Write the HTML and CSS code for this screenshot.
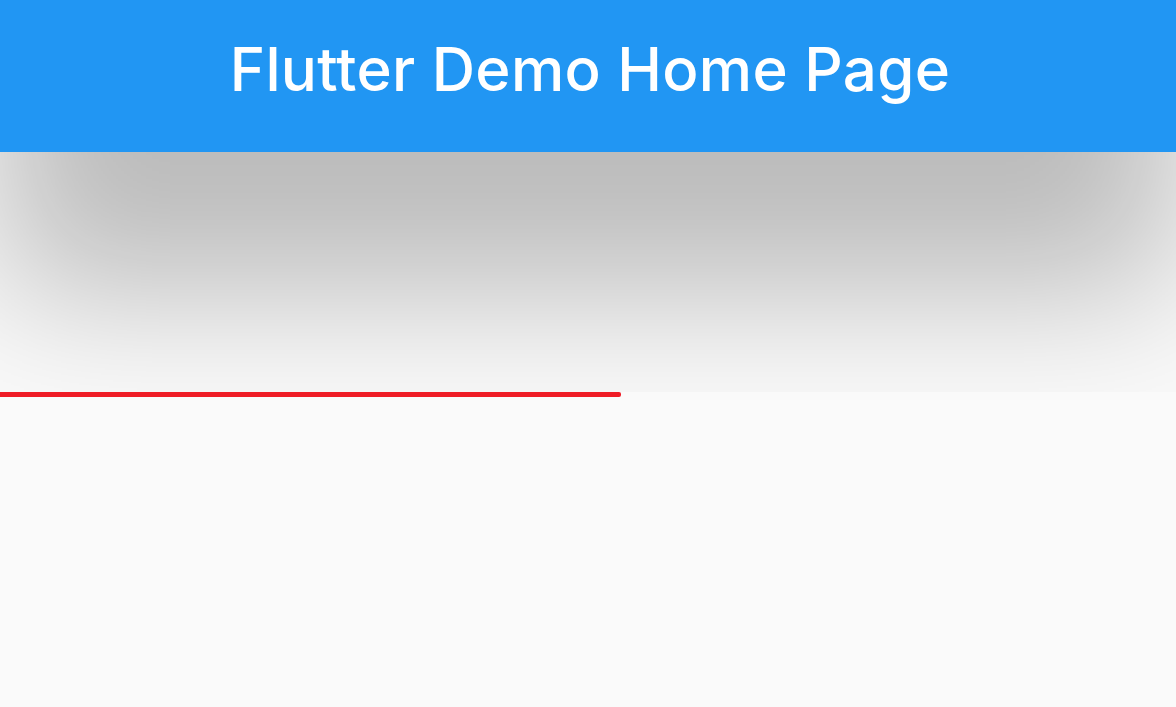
FILE: index.html
```html
<!DOCTYPE html>
<html>
<head>
<meta charset="utf-8">
<link rel="stylesheet" href="styles.css">
</head>
<body>
<div class="app">
  <header class="appbar">
    <h1 class="title">Flutter Demo Home Page</h1>
  </header>
  <div class="shade"></div>
  <main class="content">
    <div class="progress"><div class="progress-fill" style="width: 621px"></div></div>
  </main>
</div>
</body>
</html>
```

FILE: styles.css
```css
html, body {
  margin: 0;
  padding: 0;
  width: 1176px;
  height: 707px;
  overflow: hidden;
  background: #fafafa;
}

.app {
  display: flex;
  flex-direction: column;
  height: 707px;
}

.appbar {
  position: relative;
  z-index: 2;
  height: 152px;
  flex: none;
  background: #2196f3;
  display: flex;
  align-items: flex-start;
  justify-content: center;
}

.appbar::after {
  content: "";
  position: absolute;
  left: 0;
  right: 0;
  bottom: 0;
  height: 2000px;
  box-shadow: 0 140px 140px rgba(0, 0, 0, 0.25);
  z-index: -1;
}

.title {
  margin: 0;
  padding-top: 33px;
  padding-left: 4px;
  font-family: Inter, Roboto, "Liberation Sans", sans-serif;
  font-weight: 500;
  font-size: 60px;
  line-height: 72px;
  color: #ffffff;
  letter-spacing: 0.3px;
}

.shade {
  height: 240px;
  flex: none;
}

.content {
  position: relative;
  z-index: 3;
  flex: 1;
  background: #fafafa;
}

.progress {
  height: 5px;
}

.progress-fill {
  height: 5px;
  background: #ef1c26;
  border-radius: 0 2px 2px 0;
}
```
